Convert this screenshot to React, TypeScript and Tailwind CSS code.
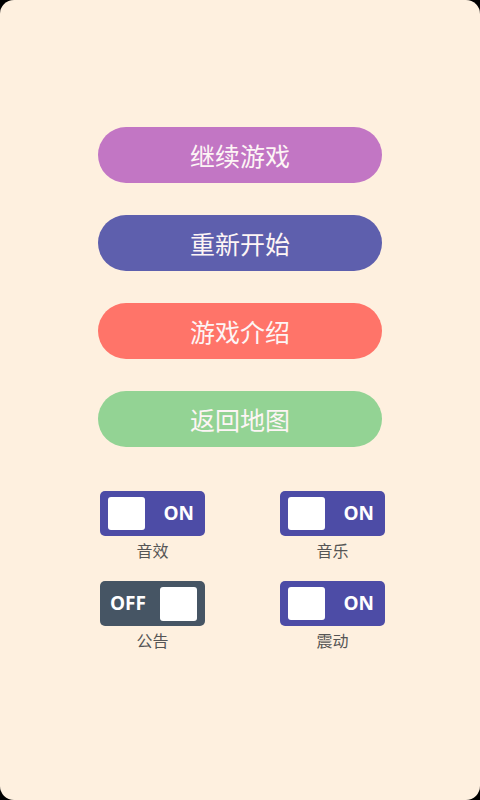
import React from "react";

const cjk = { fontFamily: '"Noto Sans CJK SC", "Noto Sans", sans-serif' };
const latin = { fontFamily: '"Open Sans", "Noto Sans", sans-serif' };

function Toggle({ on, label }: { on: boolean; label: string }) {
  return (
    <div className="flex flex-col items-center">
      {on ? (
        <div className="flex h-[45px] w-[105px] items-center rounded-[5px] bg-[#4d4ca6] pl-[8px] pr-[11px]">
          <div className="h-[33px] w-[37px] rounded-[3px] bg-white" />
          <span className="ml-auto text-[19px] font-bold leading-none text-white" style={latin}>
            ON
          </span>
        </div>
      ) : (
        <div className="flex h-[45px] w-[105px] items-center rounded-[5px] bg-[#465564] pl-[10px] pr-[8px]">
          <span className="text-[19px] font-bold leading-none text-white" style={latin}>
            OFF
          </span>
          <div className="ml-auto h-[34px] w-[37px] rounded-[3px] bg-white" />
        </div>
      )}
      <span className="mt-[4px] text-[16px] leading-[21px] text-[#555555]" style={cjk}>
        {label}
      </span>
    </div>
  );
}

function Btn({ color, text }: { color: string; text: string }) {
  return (
    <div
      className={`flex h-[56px] w-[284px] items-center justify-center rounded-full ${color}`}
    >
      <span className="text-[25px] leading-none text-[#fdf5f5]" style={cjk}>
        {text}
      </span>
    </div>
  );
}

export default function App() {
  return (
    <div className="h-[800px] w-[480px] bg-black">
      <div className="flex h-[800px] w-[480px] flex-col items-center rounded-[14px] bg-[#fef0df] pt-[127px]">
        <div className="flex flex-col items-center gap-[32px]">
          <Btn color="bg-[#c276c4]" text="继续游戏" />
          <Btn color="bg-[#5e5fad]" text="重新开始" />
          <Btn color="bg-[#ff7469]" text="游戏介绍" />
          <Btn color="bg-[#93d394]" text="返回地图" />
        </div>
        <div className="mt-[44px] ml-[5px] grid grid-cols-[105px_105px] gap-x-[75px] gap-y-[20px]">
          <Toggle on label="音效" />
          <Toggle on label="音乐" />
          <Toggle on={false} label="公告" />
          <Toggle on label="震动" />
        </div>
      </div>
    </div>
  );
}
